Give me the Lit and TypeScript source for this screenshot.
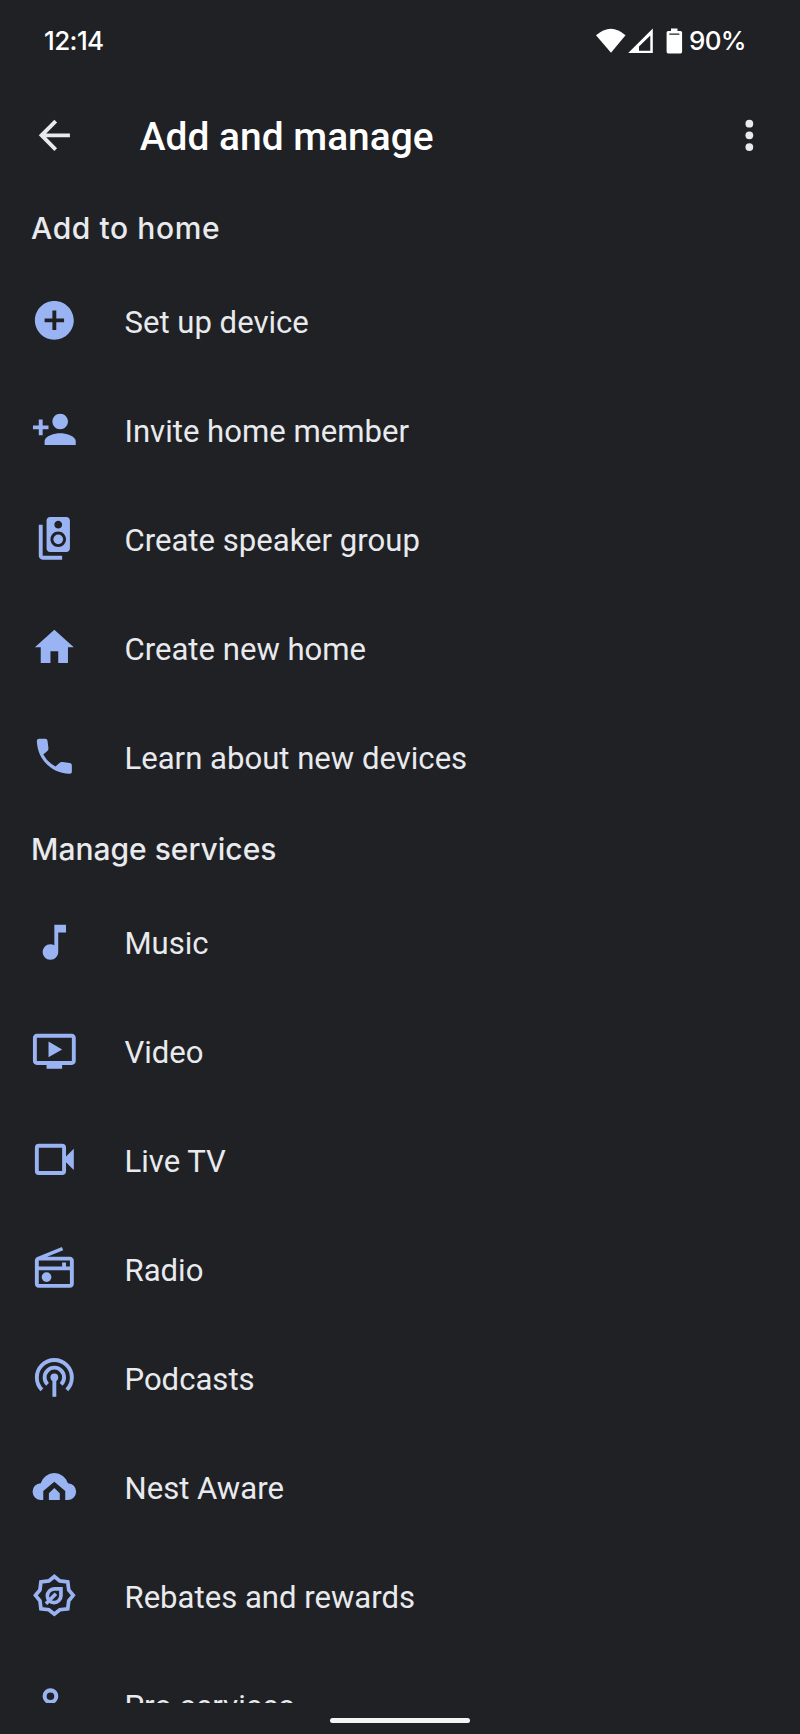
import { LitElement, html, css, svg } from "lit";
import { customElement, property } from "lit/decorators.js";

const icons: Record<string, unknown> = {
  add: svg`<path d="M12 2C6.48 2 2 6.48 2 12s4.48 10 10 10 10-4.48 10-10S17.52 2 12 2zm5 11h-4v4h-2v-4H7v-2h4V7h2v4h4v2z"/>`,
  invite: svg`<path d="M15 12c2.21 0 4-1.79 4-4s-1.79-4-4-4-4 1.79-4 4 1.79 4 4 4zm-9-2V7H4v3H1v2h3v3h2v-3h3v-2H6zm9 4c-2.67 0-8 1.34-8 4v2h16v-2c0-2.66-5.33-4-8-4z"/>`,
  speaker: svg`<path d="M18.2 1H9.8C8.81 1 8 1.81 8 2.8v14.4c0 .99.81 1.79 1.8 1.79l8.4.01c.99 0 1.8-.81 1.8-1.8V2.8c0-.99-.81-1.8-1.8-1.8zM14 3c1.1 0 2 .89 2 2s-.9 2-2 2-2-.89-2-2 .9-2 2-2zm0 13.5c-2.21 0-4-1.79-4-4s1.79-4 4-4 4 1.79 4 4-1.79 4-4 4z"/><circle cx="14" cy="12.5" r="2.5"/><path d="M6 5H4v16c0 1.1.89 2 2 2h10v-2H6V5z"/>`,
  home: svg`<path d="M10 20v-6h4v6h5v-8h3L12 3 2 12h3v8z"/>`,
  phone: svg`<path d="M19.9 15.4 16.2 14.9c-.6-.1-1.2.15-1.6.55l-2 1.75A15.2 15.2 0 0 1 6.3 11L8.4 9.3c.45-.4.65-1 .55-1.6L8.5 4.1C8.4 3.4 8 3 7.3 3H4.1C3.4 3 3 3.5 3 4.2 3.4 13.6 10.4 20.6 19.8 21c.7 0 1.2-.4 1.2-1.1v-3.2c0-.7-.4-1.2-1.1-1.3z"/>`,
  music: svg`<path d="M12 3v10.55c-.59-.34-1.27-.55-2-.55-2.21 0-4 1.79-4 4s1.79 4 4 4 4-1.79 4-4V7h4V3h-6z"/>`,
  video: svg`<path d="M21 3H3c-1.1 0-2 .9-2 2v12c0 1.1.9 2 2 2h5v2h8v-2h5c1.1 0 2-.9 2-2V5c0-1.1-.9-2-2-2zm0 14H3V5h18v12zM9 7v8l7-4z"/>`,
  camera: svg`<path fill-rule="evenodd" d="M4 4h12a2 2 0 0 1 2 2v4.5l4-4v11l-4-4V18a2 2 0 0 1-2 2H4a2 2 0 0 1-2-2V6a2 2 0 0 1 2-2zm0 2v12h12V6z"/>`,
  radio: svg`<path fill-rule="evenodd" d="M3.24 6.15C2.51 6.43 2 7.17 2 8v12c0 1.1.89 2 2 2h16c1.11 0 2-.9 2-2V8c0-1.11-.89-2-2-2H8.3l8.26-3.34L15.88 1 3.24 6.15zM20 20H4v-7h16v7zm0-9h-2V9h-2v2H4V8h16v3z"/><circle cx="8" cy="16.5" r="2.5"/>`,
  podcasts: svg`<g fill="none" stroke="currentColor" stroke-width="2"><path d="M5.6 18.4A9 9 0 1 1 18.4 18.4"/><path d="M8.5 15.6A5 5 0 1 1 15.5 15.6"/></g><circle cx="12" cy="12" r="2"/><path d="M11 12h2v10h-2z"/>`,
  nest: svg`<path d="M6.3 19H5.2A4.3 4.3 0 0 1 5 10.4 7.3 7.3 0 0 1 19 10.4 4.3 4.3 0 0 1 18.8 19H17.6v-4.600L12 9.600l-5.700 4.800z"/><path d="M9.200 19v-3.500L12 12.900l2.800 2.600v3.500z"/>`,
  rewards: svg`<path fill="none" stroke="currentColor" stroke-width="1.9" stroke-linejoin="miter" d="M12 2.3 14.8 4.6 18.9 5.1 19.4 9.2 21.7 12 19.4 14.8 18.9 18.9 14.8 19.4 12 21.7 9.2 19.4 5.1 18.9 4.6 14.8 2.3 12 4.6 9.2 5.1 5.1 9.2 4.6z"/><path fill="none" stroke="currentColor" stroke-width="1.9" d="M15.4 8.7H12A3.6 3.6 0 0 0 8.4 12.300C8.400 14.300 9.900 15.700 11.800 15.700A3.600 3.600 0 0 0 15.400 12.100zM7.700 16.300 12.800 11.200"/>`,
  pro: svg`<circle cx="10" cy="7.800" r="3" fill="none" stroke="currentColor" stroke-width="2.100"/>`,
};

@customElement("menu-row")
class MenuRow extends LitElement {
  @property() icon = "";
  @property() label = "";

  static styles = css`
    :host {
      display: flex;
      align-items: center;
      height: 108.9px;
      padding-left: 31.1px;
      box-sizing: border-box;
    }
    .icon {
      width: 46.7px;
      height: 46.7px;
      flex: none;
      color: #9ab4f3;
      fill: currentColor;
    }
    .label {
      margin-left: 46.7px;
      padding-top: 4.6px;
      font: 400 31.1px/36px Roboto, sans-serif;
      color: #e8eaed;
      white-space: nowrap;
    }
  `;

  render() {
    return html`<svg class="icon" viewBox="0 0 24 24">${icons[this.icon]}</svg>
      <span class="label">${this.label}</span>`;
  }
}

@customElement("app-root")
class AppRoot extends LitElement {
  static styles = css`
    :host {
      display: flex;
      flex-direction: column;
      height: 1734px;
      background: #202125;
      color: #e8eaed;
      overflow: hidden;
    }
    .status {
      display: flex;
      align-items: center;
      justify-content: space-between;
      height: 81px;
      padding: 0 54px 0 44px;
      box-sizing: border-box;
      flex: none;
      font: 500 26px/32px Inter, sans-serif;
      color: #fff;
    }
    .time {
      letter-spacing: -0.6px;
    }
    .battery {
      letter-spacing: -0.7px;
    }
    .indicators {
      display: flex;
      align-items: center;
    }
    .glyphs {
      width: 88px;
      height: 28px;
      margin-right: 5px;
      fill: #fff;
    }
    .bar {
      display: flex;
      align-items: center;
      height: 108.5px;
      padding: 0 27px 0 31.1px;
      box-sizing: border-box;
      flex: none;
    }
    .action {
      width: 46.7px;
      height: 46.7px;
      fill: #e8eaed;
    }
    .title {
      flex: 1;
      margin: 3px 0 0 62px;
      font: 500 38.9px/46px Roboto, sans-serif;
      color: #fff;
    }
    .list {
      height: 1513.5px;
      overflow: hidden;
      flex: none;
    }
    .section {
      height: 76.8px;
      margin: 0;
      padding: 20px 0 0 31px;
      box-sizing: border-box;
      font: 500 30px/37px Inter, sans-serif;
      white-space: nowrap;
    }
    .first {
      letter-spacing: 0.6px;
    }
    .nav {
      flex: 1;
      display: flex;
      justify-content: center;
      align-items: flex-start;
      padding-top: 15px;
    }
    .handle {
      width: 140px;
      height: 5px;
      border-radius: 3px;
      background: #f4f4f5;
    }
  `;

  private row(icon: string, label: string) {
    return html`<menu-row icon=${icon} label=${label}></menu-row>`;
  }

  render() {
    return html`
      <div class="status">
        <span class="time">12:14</span>
        <div class="indicators">
          <svg class="glyphs" viewBox="0 0 88 28">
            <path d="M0 8.300Q15-4.700 29.500 8.300L15 25.800z" />
            <path fill-rule="evenodd" d="M56.800 1.600V26H32.200zM54.300 8.500 43 19.600V23.700h11.300z" />
            <path fill-rule="evenodd" d="M75 1.500h6.500V4h3a1.600 1.600 0 0 1 1.600 1.600V24.800a1.600 1.600 0 0 1-1.600 1.600H72.200a1.600 1.600 0 0 1-1.600-1.600V5.600A1.600 1.600 0 0 1 72.200 4H75zM73.300 6.500v1.300h10V6.500z" />
          </svg>
          <span class="battery">90%</span>
        </div>
      </div>
      <div class="bar">
        <svg class="action" viewBox="0 0 24 24">
          <path d="M20 11H7.830l5.590-5.590L12 4l-8 8 8 8 1.410-1.410L7.830 13H20v-2z" />
        </svg>
        <span class="title">Add and manage</span>
        <svg class="action" viewBox="0 0 24 24">
          <circle cx="12" cy="6" r="2" />
          <circle cx="12" cy="12" r="2" />
          <circle cx="12" cy="18" r="2" />
        </svg>
      </div>
      <div class="list">
        <h2 class="section first">Add to home</h2>
        ${this.row("add", "Set up device")}
        ${this.row("invite", "Invite home member")}
        ${this.row("speaker", "Create speaker group")}
        ${this.row("home", "Create new home")}
        ${this.row("phone", "Learn about new devices")}
        <h2 class="section">Manage services</h2>
        ${this.row("music", "Music")} ${this.row("video", "Video")}
        ${this.row("camera", "Live TV")} ${this.row("radio", "Radio")}
        ${this.row("podcasts", "Podcasts")} ${this.row("nest", "Nest Aware")}
        ${this.row("rewards", "Rebates and rewards")}
        ${this.row("pro", "Pro services")}
      </div>
      <div class="nav"><div class="handle"></div></div>
    `;
  }
}
